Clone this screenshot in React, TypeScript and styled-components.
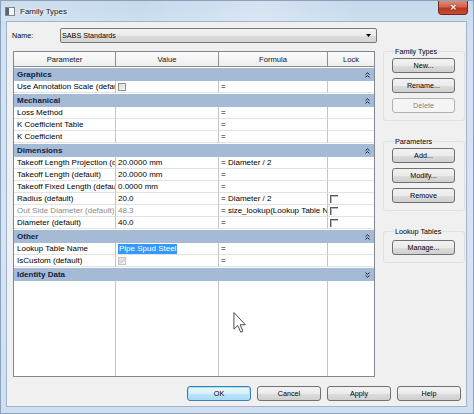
import React from "react";
import styled, { createGlobalStyle, css } from "styled-components";

const GlobalStyle = createGlobalStyle`
  html, body { margin: 0; padding: 0; background: #ffffff; }
  body {
    width: 474px; height: 414px; overflow: hidden;
    font-family: "Liberation Sans", Arial, sans-serif;
  }
  * { box-sizing: border-box; }
`;

const Window = styled.div`
  width: 474px;
  height: 414px;
  display: flex;
  flex-direction: column;
  background: linear-gradient(180deg, #c6d8ec 0%, #d3e2f2 8%, #d6e4f3 60%, #cfdff0 100%);
  border: 1px solid #8aa2be;
`;

const TitleBar = styled.div`
  height: 20px;
  display: flex;
  align-items: center;
  padding-left: 4px;
  gap: 5px;
  background: linear-gradient(90deg, rgba(255,255,255,0.15), rgba(255,255,255,0) 30%, rgba(255,255,255,0.25) 55%, rgba(255,255,255,0) 75%);
`;

const TitleText = styled.span`
  font-size: 8px;
  color: #111;
  text-shadow: 0 0 4px #ffffff, 0 0 2px #ffffff;
`;

const CloseButton = styled.div`
  margin-left: auto;
  margin-right: 5px;
  align-self: flex-start;
  width: 30px;
  height: 14px;
  border: 1px solid #6e2a1e;
  border-top: none;
  border-radius: 0 0 4px 4px;
  background: linear-gradient(180deg, #e08b78 0%, #d2644d 45%, #b8361f 55%, #c94e33 100%);
  color: #fff;
  font-size: 8px;
  font-weight: bold;
  display: flex;
  align-items: center;
  justify-content: center;
  text-shadow: 0 0 2px #6a1f12;
`;

const Frame = styled.div`
  flex: 1;
  display: flex;
  padding: 0 6px 6px 5px;
`;

const Client = styled.div`
  flex: 1;
  border: 1px solid #9fb3ca;
  background: #f0f0f0;
  display: grid;
  grid-template-columns: 371px 82px;
  grid-template-rows: 349px auto;
  padding: 6px 0 0 5px;
`;

const MainCol = styled.div`
  display: flex;
  flex-direction: column;
`;

const NameRow = styled.div`
  height: 15px;
  display: flex;
  align-items: center;
`;

const Label = styled.span`
  font-size: 7.2px;
  color: #000;
  width: 48px;
`;

const Select = styled.div`
  width: 317px;
  height: 15px;
  border: 1px solid #7a7a7a;
  border-radius: 2px;
  background: linear-gradient(180deg, #f3f3f3 0%, #ebebeb 50%, #dddddd 51%, #d3d3d3 100%);
  display: flex;
  align-items: center;
  justify-content: space-between;
  padding: 0 5px 0 1px;
  font-size: 7.2px;
  color: #000;
`;

const Table = styled.div`
  position: relative;
  margin: 8px 0 0 1px;
  width: 362px;
  flex: 1;
  border: 1px solid #828790;
  background: #ffffff;
  display: flex;
  flex-direction: column;
  overflow: hidden;
`;

const Grid = styled.div<{ $fill?: boolean }>`
  display: grid;
  grid-template-columns: 102px 103px 109px 46px;
  ${(p) => p.$fill && css`flex: 1;`}
`;

const HeadCell = styled.div<{ $last?: boolean }>`
  height: 15px;
  display: flex;
  align-items: center;
  justify-content: center;
  font-size: 7.6px;
  color: #111;
  background: linear-gradient(180deg, #fbfbfb 0%, #eeeeee 100%);
  border-bottom: 1px solid #8e8e8e;
  border-right: ${(p) => (p.$last ? "none" : "1px solid #8e8e8e")};
`;

const GroupRow = styled.div`
  grid-column: 1 / -1;
  height: 14px;
  border-top: 1px solid #ffffff;
  background: #a5bad5;
  display: flex;
  align-items: center;
  justify-content: space-between;
  padding: 0 4px 0 3px;
  font-size: 8px;
  font-weight: bold;
  color: #0f223d;
`;

const Cell = styled.div<{ $last?: boolean; $muted?: boolean; $pad?: number }>`
  height: 12px;
  border-bottom: 1px solid #e2e2e2;
  border-right: ${(p) => (p.$last ? "none" : "1px solid #c4c4c4")};
  display: flex;
  align-items: center;
  padding-left: ${(p) => p.$pad ?? 3}px;
  font-size: 8px;
  color: ${(p) => (p.$muted ? "#8a8a8a" : "#000")};
  white-space: nowrap;
  overflow: hidden;
`;

const FillCell = styled.div<{ $last?: boolean }>`
  border-right: ${(p) => (p.$last ? "none" : "1px solid #c4c4c4")};
`;

const CheckBox = styled.span<{ $disabled?: boolean }>`
  width: 8px;
  height: 8px;
  flex: none;
  border: 1px solid ${(p) => (p.$disabled ? "#c2c2c2" : "#8e8f8f")};
  background: linear-gradient(135deg, #dcdcdc 0%, #f6f6f6 100%);
  display: flex;
  align-items: center;
  justify-content: center;
`;

const LockBox = styled.span`
  width: 8px;
  height: 8px;
  border-top: 1px solid #5a5a5a;
  border-left: 1px solid #5a5a5a;
  box-shadow: inset 1px 1px 0 #b8b8b8;
`;

const Selected = styled.span`
  background: #3399ff;
  color: #ffffff;
  padding: 0 1px;
  line-height: 10px;
`;

const Cursor = styled.svg`
  position: absolute;
  left: 219px;
  top: 260px;
`;

const SidePanel = styled.div`
  display: flex;
  flex-direction: column;
  padding-top: 19px;
  gap: 16px;
`;

const GroupBox = styled.fieldset<{ $top?: number }>`
  margin: 0;
  padding: ${(p) => p.$top ?? 2}px 8px 7px 8px;
  border: 1px solid #dde1e5;
  border-radius: 3px;
  display: flex;
  flex-direction: column;
  gap: 5px;
`;

const Legend = styled.legend`
  font-size: 7.2px;
  line-height: 9px;
  padding: 0 1px;
  margin-left: 2px;
  color: #000;
`;

const Button = styled.div<{ $default?: boolean; $disabled?: boolean }>`
  width: 64px;
  height: 15px;
  border: 1px solid #707070;
  border-radius: 3px;
  background: linear-gradient(180deg, #f2f2f2 0%, #ebebeb 50%, #dddddd 51%, #cfcfcf 100%);
  display: flex;
  align-items: center;
  justify-content: center;
  font-size: 7.2px;
  color: #000;
  ${(p) =>
    p.$default &&
    css`
      border-color: #3c7fb1;
      box-shadow: inset 0 0 0 1px #a8e0f8;
      background: linear-gradient(180deg, #eaf6fd 0%, #d9f0fc 50%, #bee6fd 51%, #a7d9f5 100%);
    `}
  ${(p) =>
    p.$disabled &&
    css`
      border-color: #adb2b5;
      background: #f4f4f4;
      color: #838383;
    `}
`;

const SideButton = styled(Button)`
  width: 63px;
`;

const ButtonRow = styled.div`
  grid-column: 1 / -1;
  display: flex;
  justify-content: flex-end;
  gap: 6px;
  padding-right: 4px;
  margin-top: 9px;
`;

const Chevron = ({ down }: { down?: boolean }) => (
  <svg width="5" height="6" viewBox="0 0 5 6">
    <path
      d={down ? "M0.5 0.6 L2.5 2.4 L4.5 0.6 M0.5 3.4 L2.5 5.2 L4.5 3.4" : "M0.5 2.6 L2.5 0.8 L4.5 2.6 M0.5 5.4 L2.5 3.6 L4.5 5.4"}
      stroke="#0f223d"
      strokeWidth="1"
      fill="none"
    />
  </svg>
);

const AppIcon = () => (
  <svg width="10" height="9" viewBox="0 0 10 9">
    <rect x="0.5" y="0.5" width="9" height="8" fill="#f4f6f8" stroke="#7d8792" />
    <rect x="1" y="1" width="3" height="7" fill="#5b6570" />
  </svg>
);

type Row = {
  name: string;
  value?: React.ReactNode;
  formula: string;
  lock?: boolean;
  muted?: boolean;
};

type Group = { title: string; collapsed?: boolean; rows: Row[] };

const groups: Group[] = [
  {
    title: "Graphics",
    rows: [{ name: "Use Annotation Scale (default)", value: <CheckBox />, formula: "=" }],
  },
  {
    title: "Mechanical",
    rows: [
      { name: "Loss Method", formula: "=" },
      { name: "K Coefficient Table", formula: "=" },
      { name: "K Coefficient", formula: "=" },
    ],
  },
  {
    title: "Dimensions",
    rows: [
      { name: "Takeoff Length Projection (default)", value: "20.0000 mm", formula: "= Diameter / 2" },
      { name: "Takeoff Length (default)", value: "20.0000 mm", formula: "=" },
      { name: "Takeoff Fixed Length (default)", value: "0.0000 mm", formula: "=" },
      { name: "Radius (default)", value: "20.0", formula: "= Diameter / 2", lock: true },
      {
        name: "Out Side Diameter (default)",
        value: "48.3",
        formula: "= size_lookup(Lookup Table Name, \"OD\", 48.3, ND)",
        lock: true,
        muted: true,
      },
      { name: "Diameter (default)", value: "40.0", formula: "=", lock: true },
    ],
  },
  {
    title: "Other",
    rows: [
      { name: "Lookup Table Name", value: <Selected>Pipe Spud Steel</Selected>, formula: "=" },
      {
        name: "IsCustom (default)",
        value: (
          <CheckBox $disabled>
            <svg width="6" height="6" viewBox="0 0 6 6">
              <path d="M0.8 3.2 L2.4 4.8 L5.3 1" stroke="#b4b4b4" strokeWidth="1" fill="none" />
            </svg>
          </CheckBox>
        ),
        formula: "=",
      },
    ],
  },
  { title: "Identity Data", collapsed: true, rows: [] },
];

export default function App() {
  return (
    <>
      <GlobalStyle />
      <Window>
        <TitleBar>
          <AppIcon />
          <TitleText>Family Types</TitleText>
          <CloseButton>✕</CloseButton>
        </TitleBar>
        <Frame>
          <Client>
            <MainCol>
              <NameRow>
                <Label>Name:</Label>
                <Select>
                  <span>SABS Standards</span>
                  <svg width="5" height="3" viewBox="0 0 5 3">
                    <path d="M0 0 H5 L2.5 3 Z" fill="#000" />
                  </svg>
                </Select>
              </NameRow>
              <Table>
                <Grid>
                  <HeadCell>Parameter</HeadCell>
                  <HeadCell>Value</HeadCell>
                  <HeadCell>Formula</HeadCell>
                  <HeadCell $last>Lock</HeadCell>
                  {groups.map((g) => (
                    <React.Fragment key={g.title}>
                      <GroupRow>
                        <span>{g.title}</span>
                        <Chevron down={g.collapsed} />
                      </GroupRow>
                      {g.rows.map((r) => (
                        <React.Fragment key={r.name}>
                          <Cell $muted={r.muted}>{r.name}</Cell>
                          <Cell $muted={r.muted} $pad={2}>{r.value}</Cell>
                          <Cell $pad={2}>{r.formula}</Cell>
                          <Cell $last $pad={2}>{r.lock && <LockBox />}</Cell>
                        </React.Fragment>
                      ))}
                    </React.Fragment>
                  ))}
                </Grid>
                <Grid $fill>
                  <FillCell />
                  <FillCell />
                  <FillCell />
                  <FillCell $last />
                </Grid>
                <Cursor width="14" height="21" viewBox="0 0 12 19">
                  <path
                    d="M0.5 0.5 L0.5 15.5 L4 12.2 L6.6 18.3 L8.6 17.4 L6.1 11.5 L10.8 11.5 Z"
                    fill="#ffffff"
                    stroke="#4a4a4a"
                    strokeWidth="0.9"
                    strokeLinejoin="round"
                  />
                </Cursor>
              </Table>
            </MainCol>
            <SidePanel>
              <GroupBox>
                <Legend>Family Types</Legend>
                <SideButton>New...</SideButton>
                <SideButton>Rename...</SideButton>
                <SideButton $disabled>Delete</SideButton>
              </GroupBox>
              <GroupBox>
                <Legend>Parameters</Legend>
                <SideButton>Add...</SideButton>
                <SideButton>Modify...</SideButton>
                <SideButton>Remove</SideButton>
              </GroupBox>
              <GroupBox $top={4}>
                <Legend>Lookup Tables</Legend>
                <SideButton>Manage...</SideButton>
              </GroupBox>
            </SidePanel>
            <ButtonRow>
              <Button $default>OK</Button>
              <Button>Cancel</Button>
              <Button>Apply</Button>
              <Button>Help</Button>
            </ButtonRow>
          </Client>
        </Frame>
      </Window>
    </>
  );
}
